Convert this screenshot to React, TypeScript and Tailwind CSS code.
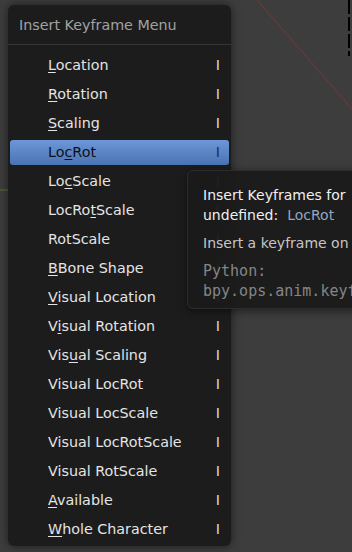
const items = [
  { label: "Location", u: 0 },
  { label: "Rotation", u: 0 },
  { label: "Scaling", u: 0 },
  { label: "LocRot", u: 2, active: true },
  { label: "LocScale", u: 2 },
  { label: "LocRotScale", u: 5 },
  { label: "RotScale", u: -1 },
  { label: "BBone Shape", u: 0 },
  { label: "Visual Location", u: 0 },
  { label: "Visual Rotation", u: 1 },
  { label: "Visual Scaling", u: 3 },
  { label: "Visual LocRot", u: -1 },
  { label: "Visual LocScale", u: -1 },
  { label: "Visual LocRotScale", u: -1 },
  { label: "Visual RotScale", u: -1 },
  { label: "Available", u: 0 },
  { label: "Whole Character", u: 0 },
];

function Label({ text, u }: { text: string; u: number }) {
  if (u < 0) return <span>{text}</span>;
  return (
    <span>
      {text.slice(0, u)}
      <span className="underline decoration-1 underline-offset-[2px]">{text[u]}</span>
      {text.slice(u + 1)}
    </span>
  );
}

function MenuRow({ label, u, active }: { label: string; u: number; active?: boolean }) {
  return (
    <div className="h-[29px] px-[2px] py-[2px]">
      <div
        className={
          active
            ? "flex h-[25px] items-center justify-between rounded-[3px] bg-gradient-to-b from-[#6d97d8] to-[#4a73b3] pl-[38px] pr-[9px] text-[#0c0f18]"
            : "flex h-[25px] items-center justify-between pl-[38px] pr-[9px] text-[#e4e4e4]"
        }
      >
        <Label text={label} u={u} />
        <span className={active ? "text-[#1b2d5c]" : "text-[#d8d8d8]"}>I</span>
      </div>
    </div>
  );
}

export default function App() {
  return (
    <div
      className="relative h-[552px] w-[352px] overflow-hidden bg-[#3d3d3d]"
      style={{ fontFamily: '"DejaVu Sans", Verdana, sans-serif' }}
    >
      {/* viewport decorations behind the menu */}
      <svg className="absolute left-0 top-0" width="352" height="552">
        <line x1="257" y1="0" x2="352" y2="109" stroke="#6b3b3b" strokeWidth="1.5" opacity="0.7" />
        <line x1="0" y1="190" x2="10" y2="190" stroke="#4f7a3e" strokeWidth="1" />
        <line x1="349" y1="0" x2="349" y2="56" stroke="#000" strokeWidth="2" strokeDasharray="14 3" />
      </svg>

      <div className="relative ml-[8px] mt-[5px] w-[223px] rounded-[6px] bg-[#1c1c1c] pb-[2px] text-[14.3px] shadow-[0_0_10px_rgba(0,0,0,0.55)]">
        <div className="flex h-[39px] items-center pl-[11px] pt-[2px] text-[#a2a2a2]">Insert Keyframe Menu</div>
        <div className="h-px bg-[#363636]" />
        <div className="pt-[6px]">
          {items.map((it) => (
            <MenuRow key={it.label} label={it.label} u={it.u} active={it.active} />
          ))}
        </div>
      </div>

      {/* tooltip */}
      <div className="absolute left-[187px] top-[170px] w-[200px] rounded-[6px] border border-[#2c2c2c] bg-[rgba(27,27,27,0.97)] pb-[7px] pl-[15px] pt-[14px] text-[14px] leading-[20px] shadow-[0_2px_8px_rgba(0,0,0,0.5)]">
        <div className="whitespace-nowrap text-[#f0f0f0]">Insert Keyframes for</div>
        <div className="whitespace-nowrap text-[#f0f0f0]">
          undefined:<span className="ml-[9px] text-[#93a6c2]">LocRot</span>
        </div>
        <div className="mt-[8px] whitespace-nowrap text-[#c6c6c6]">Insert a keyframe on all</div>
        <div
          className="mt-[8px] whitespace-nowrap text-[15px] text-[#858585]"
          style={{ fontFamily: '"DejaVu Sans Mono", "Liberation Mono", monospace' }}
        >
          <div>Python:</div>
          <div>bpy.ops.anim.keyframe_insert_menu()</div>
        </div>
      </div>
    </div>
  );
}
